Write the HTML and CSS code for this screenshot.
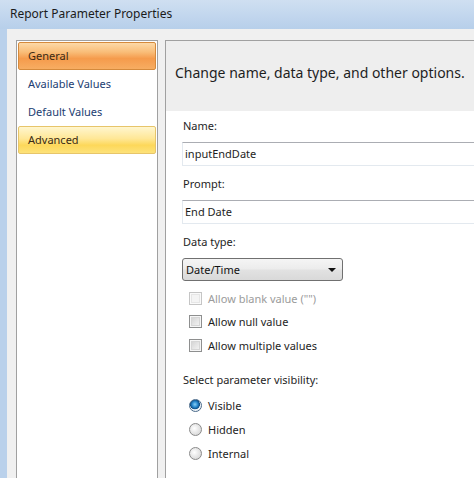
FILE: index.html
```html
<!DOCTYPE html>
<html>
<head>
<meta charset="utf-8">
<link rel="stylesheet" href="styles.css">
</head>
<body>
<div class="window">
  <div class="titlebar">Report Parameter Properties</div>
  <div class="frame">
    <div class="nav">
      <div class="nav-item selected">General</div>
      <div class="nav-item">Available Values</div>
      <div class="nav-item">Default Values</div>
      <div class="nav-item hover">Advanced</div>
    </div>
    <div class="content">
      <div class="header">Change name, data type, and other options.</div>
      <div class="form">
        <div class="label">Name:</div>
        <div class="input">inputEndDate</div>
        <div class="label">Prompt:</div>
        <div class="input">End Date</div>
        <div class="label">Data type:</div>
        <div class="select"><span>Date/Time</span><span class="arrow"></span></div>
        <div class="checks">
          <div class="check disabled"><span class="box"></span>Allow blank value ("")</div>
          <div class="check"><span class="box"></span>Allow null value</div>
          <div class="check"><span class="box"></span>Allow multiple values</div>
        </div>
        <div class="label vis">Select parameter visibility:</div>
        <div class="radios">
          <div class="radio"><span class="dot on"></span>Visible</div>
          <div class="radio"><span class="dot"></span>Hidden</div>
          <div class="radio"><span class="dot"></span>Internal</div>
        </div>
      </div>
    </div>
  </div>
</div>
</body>
</html>
```
FILE: styles.css
```css
html, body {
  margin: 0;
  padding: 0;
  width: 474px;
  height: 478px;
  overflow: hidden;
  background: #f0f0f0;
}
.window {
  width: 474px;
  height: 478px;
  display: flex;
  flex-direction: column;
  font-family: "Noto Sans", "Open Sans", sans-serif;
  color: #1e1e1e;
}
.titlebar {
  height: 29px;
  flex: none;
  box-sizing: border-box;
  padding: 5px 0 0 10px;
  font-size: 12px;
  line-height: 18px;
  color: #1b1b1b;
  background: linear-gradient(#cfdff1 0%, #c3d7ee 50%, #b7cfea 100%);
}
.frame {
  flex: 1;
  display: flex;
  gap: 7px;
  border-left: 7px solid #bad1eb;
  background: #f0f0f0;
  padding: 11px 0 0 9px;
  min-height: 0;
}
.nav {
  width: 142px;
  flex: none;
  box-sizing: border-box;
  background: #fff;
  border: 1px solid #a0a0a0;
  border-bottom: none;
  padding: 1px;
}
.nav-item {
  height: 28px;
  box-sizing: border-box;
  padding-left: 9px;
  font-size: 11px;
  line-height: 26px;
  color: #223d72;
  border: 1px solid transparent;
  border-radius: 2px;
}
.nav-item.selected {
  color: #3a2a14;
  border-color: #d58a3c;
  background: linear-gradient(#fcd9a8 0%, #f9bd78 35%, #f59b4c 60%, #f7ad62 100%);
}
.nav-item.hover {
  color: #3a2a14;
  border-color: #e7c56a;
  background: linear-gradient(#fff6cf 0%, #ffe796 45%, #fdd85a 70%, #fde27a 100%);
}
.content {
  flex: none;
  width: 320px;
  background: #fff;
  border-left: 1px solid #a0a0a0;
  border-top: 1px solid #a0a0a0;
}
.header {
  height: 70px;
  box-sizing: border-box;
  background: #eeeeee;
  padding: 22px 0 0 9px;
  font-size: 14px;
  line-height: 20px;
  color: #1e1e1e;
  white-space: nowrap;
}
.form {
  padding: 5px 0 0 17px;
  font-size: 11px;
}
.label {
  height: 20px;
  line-height: 20px;
  margin-bottom: 6px;
  color: #1e1e1e;
}
.input {
  height: 24px;
  box-sizing: border-box;
  margin-left: -1px;
  margin-bottom: 8px;
  border: 1px solid #e3e9ef;
  border-top-color: #abadb3;
  border-right: none;
  padding-left: 2px;
  line-height: 22px;
  color: #1e1e1e;
}
.select {
  width: 161px;
  height: 23px;
  box-sizing: border-box;
  margin-left: -1px;
  border: 1px solid #707070;
  border-radius: 3px;
  background: linear-gradient(#f5f5f5 0%, #ececec 48%, #e2e2e2 52%, #d9d9d9 100%);
  display: flex;
  align-items: center;
  justify-content: space-between;
  padding: 0 6px 0 3px;
  color: #111;
}
.arrow {
  width: 0;
  height: 0;
  border-left: 4px solid transparent;
  border-right: 4px solid transparent;
  border-top: 4px solid #111;
}
.checks {
  padding: 7px 0 0 6px;
  display: flex;
  flex-direction: column;
  gap: 3.5px;
}
.check, .radio {
  height: 20px;
  display: flex;
  align-items: center;
  gap: 6px;
  color: #1e1e1e;
}
.check.disabled {
  color: #9b9b9b;
}
.box {
  width: 13px;
  height: 13px;
  box-sizing: border-box;
  border: 1px solid #8e8f8f;
  background: linear-gradient(135deg, #cdcdcd 0%, #e6e6e6 55%, #f8f8f8 100%);
  box-shadow: inset 0 0 0 1px #f6f6f6, inset 0 0 0 2px #d6d6d6;
}
.check.disabled .box {
  border-color: #c5c5c5;
  background: #f4f4f4;
  box-shadow: inset 0 0 0 1px #fafafa, inset 0 0 0 2px #e6e6e6;
}
.label.vis {
  margin-top: 15px;
  margin-bottom: 5px;
}
.radios {
  padding-left: 6px;
  display: flex;
  flex-direction: column;
  gap: 4px;
}
.dot {
  width: 13px;
  height: 13px;
  box-sizing: border-box;
  border-radius: 50%;
  border: 1px solid #8a8a8a;
  background: radial-gradient(circle at 40% 40%, #ffffff 0%, #e8e8e8 45%, #cfcfcf 100%);
}
.dot.on {
  border-color: #4a6a8a;
  background: radial-gradient(circle at 45% 40%, #8ad0f5 0%, #2a8ad0 30%, #0d4e86 52%, #e8eef4 58%, #ffffff 100%);
}
```
